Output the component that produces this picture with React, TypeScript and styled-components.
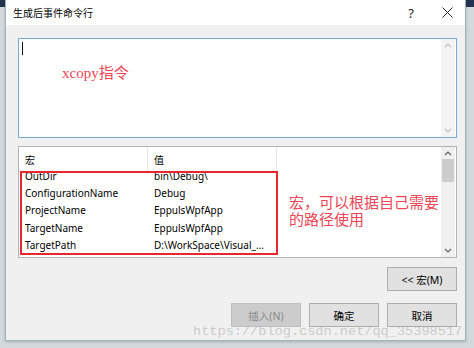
import React from 'react';
import styled, { createGlobalStyle } from 'styled-components';

const Global = createGlobalStyle`
  html, body {
    margin: 0;
    padding: 0;
    width: 474px;
    height: 348px;
    overflow: hidden;
    background: linear-gradient(#22344f 0 7px, #d3d9dc 7px);
  }
  * { box-sizing: border-box; }
`;

const Page = styled.div`
  width: 474px;
  height: 348px;
  padding-left: 5px;
  position: relative;
  font-family: "Noto Sans", "Noto Sans CJK SC", sans-serif;
`;

const Dialog = styled.div`
  width: 461px;
  height: 341px;
  border: 1px solid #9fb3bb;
  border-top: none;
  background: #f0f0f0;
  display: flex;
  flex-direction: column;
  box-shadow: 0 1px 3px rgba(0, 0, 0, 0.2);
`;

const TitleBar = styled.div`
  height: 25px;
  background: #ffffff;
  display: flex;
  align-items: center;
  padding-left: 7px;
`;

const Title = styled.div`
  flex: 1;
  font-family: "Noto Sans CJK SC", sans-serif;
  font-size: 10px;
  color: #000;
`;

const TitleButton = styled.div`
  width: 36px;
  height: 25px;
  display: flex;
  align-items: center;
  justify-content: center;
  font-family: "Noto Sans", sans-serif;
  font-size: 13px;
  color: #222;
`;

const Body = styled.div`
  flex: 1;
  display: flex;
  flex-direction: column;
  padding: 13px 8px 0 12px;
`;

const TextBox = styled.div`
  height: 100px;
  border: 1px solid #76a9d6;
  background: #fff;
  display: flex;
`;

const TextContent = styled.div`
  flex: 1;
  padding: 3px 3px;
`;

const Caret = styled.div`
  width: 1px;
  height: 13px;
  background: #111;
`;

const CommandNote = styled.div`
  margin: 6px 0 0 40px;
  font-family: "Liberation Serif", "Noto Sans CJK SC", serif;
  font-size: 15px;
  color: #ec4656;
`;

const ScrollBar = styled.div<{ $light?: boolean }>`
  width: 14px;
  margin-right: 1px;
  background: ${(p) => (p.$light ? '#f4f4f4' : '#f0f0f0')};
  display: flex;
  flex-direction: column;
  align-items: center;
  justify-content: space-between;
  padding: 4px 0;
`;

const Thumb = styled.div`
  width: 12px;
  height: 23px;
  background: #cdcdcd;
  margin-top: 3px;
  flex: none;
`;

const Spacer = styled.div`
  flex: 1;
`;

const Chevron = ({ up, color = '#9a9a9a' }: { up?: boolean; color?: string }) => (
  <svg width="8" height="5" viewBox="0 0 8 5">
    <path
      d={up ? 'M1 4 L4 1 L7 4' : 'M1 1 L4 4 L7 1'}
      fill="none"
      stroke={color}
      strokeWidth="1.2"
    />
  </svg>
);

const Grid = styled.div`
  margin-top: 8px;
  height: 112px;
  border: 1px solid #b4b4b4;
  background: #fff;
  display: flex;
  position: relative;
`;

const GridMain = styled.div`
  flex: 1;
  display: flex;
  flex-direction: column;
  overflow: hidden;
`;

const HeaderRow = styled.div`
  height: 24px;
  display: grid;
  grid-template-columns: 129px 129px 1fr;
  flex: none;
`;

const HeaderCell = styled.div`
  display: flex;
  align-items: center;
  padding-left: 6px;
  border-right: 1px solid #e5e5e5;
  font-family: "Noto Sans CJK SC", sans-serif;
  font-size: 10px;
  color: #000;
  &:last-child { border-right: none; }
`;

const Rows = styled.div`
  flex: 1;
  overflow: hidden;
`;

const RowList = styled.div`
  margin-top: -4px;
`;

const Row = styled.div`
  height: 17.33px;
  display: grid;
  grid-template-columns: 129px 129px 1fr;
  align-items: center;
  font-family: "Noto Sans", sans-serif;
  font-size: 10px;
  color: #000;
`;

const Cell = styled.div`
  padding-left: 6px;
  white-space: nowrap;
  overflow: hidden;
  text-overflow: ellipsis;
`;

const MarkBox = styled.div`
  position: absolute;
  left: 1px;
  top: 24px;
  width: 258px;
  height: 84px;
  border: 2px solid #e8262f;
  pointer-events: none;
`;

const MarkNote = styled.div`
  position: absolute;
  left: 270px;
  top: 46px;
  font-family: "Noto Sans CJK SC", sans-serif;
  font-size: 15px;
  line-height: 17px;
  color: #ec4656;
`;

const ButtonRow = styled.div<{ $top: number }>`
  display: flex;
  justify-content: flex-end;
  gap: 8px;
  margin-top: ${(p) => p.$top}px;
`;

const Button = styled.div<{ $disabled?: boolean }>`
  width: 70px;
  height: 24px;
  display: flex;
  align-items: center;
  justify-content: center;
  background: ${(p) => (p.$disabled ? '#cccccc' : '#e1e1e1')};
  border: 1px solid ${(p) => (p.$disabled ? '#bfbfbf' : '#adadad')};
  color: ${(p) => (p.$disabled ? '#8a8a8a' : '#000')};
  font-family: "Noto Sans", "Noto Sans CJK SC", sans-serif;
  font-size: 10.5px;
`;

const Watermark = styled.div`
  position: absolute;
  left: 193px;
  top: 324px;
  font-family: "Liberation Mono", monospace;
  font-size: 13.6px;
  color: rgba(165, 165, 165, 0.5);
  white-space: nowrap;
  pointer-events: none;
`;

const rows: [string, string][] = [
  ['OutDir', 'bin\\Debug\\'],
  ['ConfigurationName', 'Debug'],
  ['ProjectName', 'EppulsWpfApp'],
  ['TargetName', 'EppulsWpfApp'],
  ['TargetPath', 'D:\\WorkSpace\\Visual_Studio_Projects\\EppulsWpfApp.exe'],
];

export default function App() {
  return (
    <Page>
      <Global />
      <Dialog>
        <TitleBar>
          <Title>生成后事件命令行</Title>
          <TitleButton>?</TitleButton>
          <TitleButton>
            <svg width="11" height="11" viewBox="0 0 11 11">
              <path d="M0.5 0.5 L10.5 10.5 M10.5 0.5 L0.5 10.5" stroke="#222" strokeWidth="1" />
            </svg>
          </TitleButton>
        </TitleBar>
        <Body>
          <TextBox>
            <TextContent>
              <Caret />
              <CommandNote>xcopy指令</CommandNote>
            </TextContent>
            <ScrollBar $light>
              <Chevron up color="#c0c0c0" />
              <Chevron color="#c0c0c0" />
            </ScrollBar>
          </TextBox>
          <Grid>
            <GridMain>
              <HeaderRow>
                <HeaderCell>宏</HeaderCell>
                <HeaderCell>值</HeaderCell>
                <HeaderCell />
              </HeaderRow>
              <Rows>
                <RowList>
                  {rows.map(([k, v]) => (
                    <Row key={k}>
                      <Cell>{k}</Cell>
                      <Cell style={{ paddingRight: 10 }}>{v}</Cell>
                      <Cell />
                    </Row>
                  ))}
                </RowList>
              </Rows>
            </GridMain>
            <ScrollBar>
              <Chevron up color="#606060" />
              <Thumb />
              <Spacer />
              <Chevron color="#606060" />
            </ScrollBar>
            <MarkBox />
            <MarkNote>
              宏，可以根据自己需要
              <br />
              的路径使用
            </MarkNote>
          </Grid>
          <ButtonRow $top={9}>
            <Button>&lt;&lt; 宏(M)</Button>
          </ButtonRow>
          <ButtonRow $top={12}>
            <Button $disabled>插入(N)</Button>
            <Button>确定</Button>
            <Button>取消</Button>
          </ButtonRow>
        </Body>
      </Dialog>
      <Watermark>https://blog.csdn.net/qq_35398517</Watermark>
    </Page>
  );
}
